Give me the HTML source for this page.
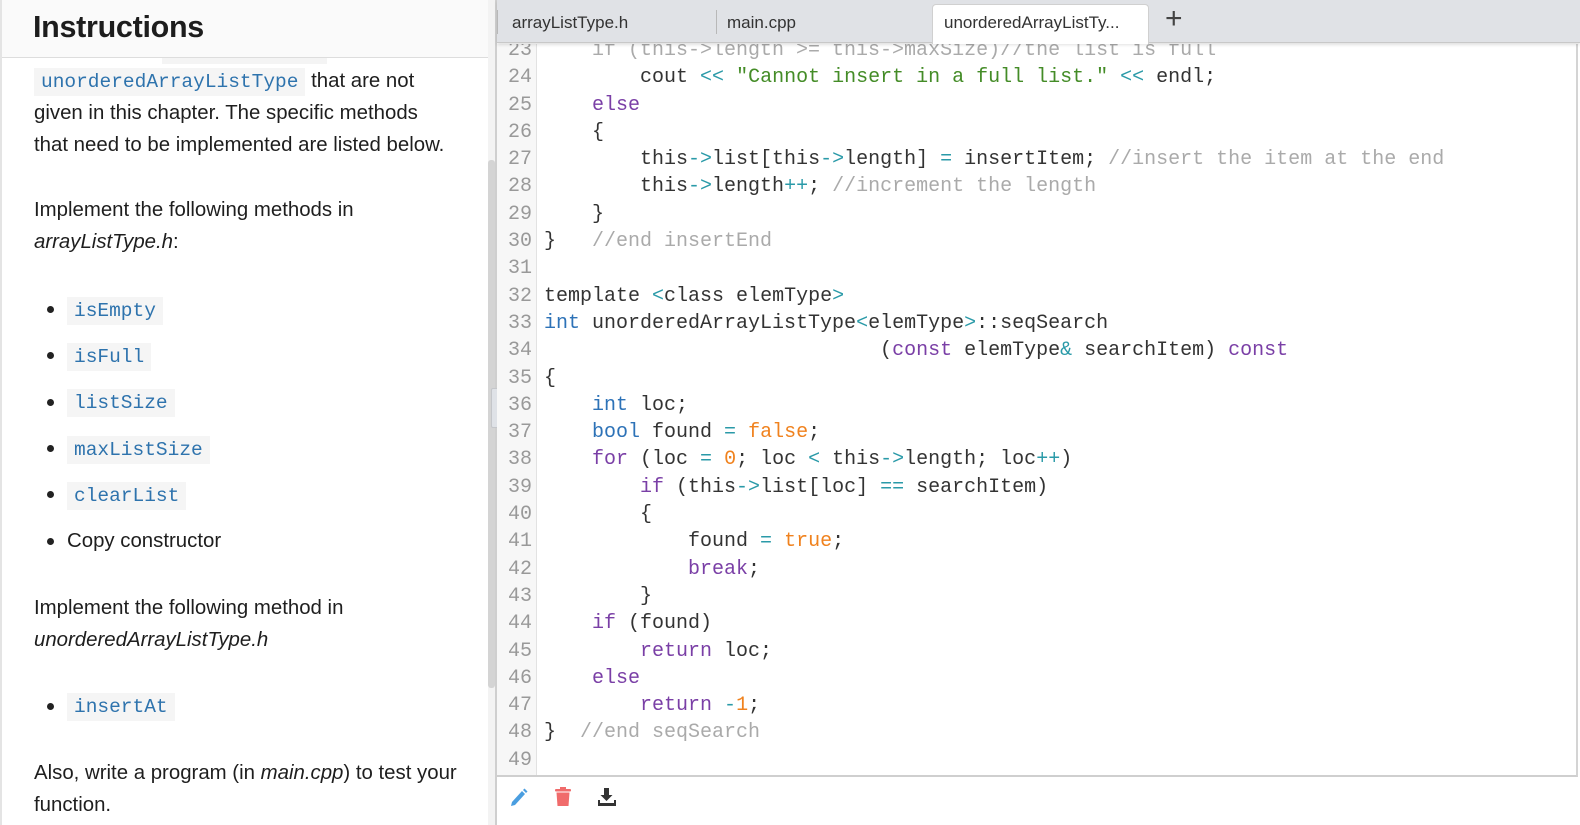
<!DOCTYPE html>
<html><head><meta charset="utf-8"><style>
*{margin:0;padding:0;box-sizing:border-box}
body{width:1580px;height:825px;overflow:hidden;background:#fff;font-family:"Liberation Sans",sans-serif;position:relative}
#left{position:absolute;left:0;top:0;width:488px;height:825px;background:#fff;border-left:2px solid #e4e4e4;overflow:hidden}
#hdr{position:absolute;left:0;top:0;width:488px;height:58px;background:#fafafa;border-bottom:1px solid #ddd;z-index:2}
#hdr h1{position:absolute;left:31px;top:10px;font-size:30.5px;font-weight:bold;color:#1d1d1d;letter-spacing:-0.3px}
.t{position:absolute;left:32px;font-size:20.4px;color:#1e1e1e;line-height:32px;white-space:nowrap}
code{font-family:"Liberation Mono",monospace;color:#2e73ad;background:#f5f5f5;font-size:19.5px;padding:3px 7px}
.b{position:absolute;left:45px;width:7px;height:7px;border-radius:50%;background:#222}
#track{position:absolute;left:488px;top:0;width:7px;height:825px;background:#f3f3f3}
#thumb{position:absolute;left:488px;top:160px;width:7px;height:528px;background:#d4d4d4;border-radius:3px}
#div{position:absolute;left:495px;top:0;width:2px;height:825px;background:#cfcfcf}
#handle{position:absolute;left:491px;top:388px;width:8px;height:40px;background:#dfe2e7;border:1px solid #c4c6ca;border-radius:2px}
#right{position:absolute;left:497px;top:0;width:1083px;height:825px;background:#fff}
#tabs{position:absolute;left:0;top:0;width:1083px;height:43px;background:#e0e2e6;border-bottom:1px solid #c8c8c8;box-shadow:0 2px 3px rgba(0,0,0,.12);z-index:3}
.tab{position:absolute;top:13px;font-size:17px;color:#333}
.sep{position:absolute;top:10px;width:1px;height:24px;background:#b8b8b8}
#act{position:absolute;left:435px;top:4px;width:217px;height:40px;background:#fff;border:1px solid #d0d0d0;border-bottom:none;border-radius:4px 4px 0 0}
#code{position:absolute;left:0;top:44px;width:1081px;height:733px;overflow:hidden;border-bottom:2px solid #cfcfcf;border-right:2px solid #d4d4d4}
#gut{position:absolute;left:0;top:0;width:40px;height:733px;background:#f7f7f7;border-right:1px solid #e2e2e2}
#lines{position:absolute;left:7px;top:-7px;font-family:"Liberation Mono",monospace;font-size:20px;line-height:27.3px;white-space:pre;color:#333}
.ln{display:inline-block;width:28px;text-align:right;color:#999;margin-right:12px}
.k{color:#7a3fa6}.ty{color:#2d72b7}.o{color:#2a9aa8}.s{color:#448c27}.c{color:#aaa}.n{color:#f0821e}
#tb{position:absolute;left:0;top:777px;width:1083px;height:48px}
</style></head><body>
<div id="left">
<div id="hdr"><h1>Instructions</h1></div>
<div style="position:absolute;left:160px;top:58px;width:165px;height:6px;background:#f4f4f4"></div>
<div class="t" style="top:65px"><code>unorderedArrayListType</code> that are not</div>
<div class="t" style="top:97px">given in this chapter. The specific methods</div>
<div class="t" style="top:129px">that need to be implemented are listed below.</div>
<div class="t" style="top:194px">Implement the following methods in</div>
<div class="t" style="top:226px"><i>arrayListType.h</i>:</div>
<div class="b" style="top:306px"></div><div class="t" style="left:65px;top:294px"><code>isEmpty</code></div>
<div class="b" style="top:352px"></div><div class="t" style="left:65px;top:340px"><code>isFull</code></div>
<div class="b" style="top:399px"></div><div class="t" style="left:65px;top:386px"><code>listSize</code></div>
<div class="b" style="top:445px"></div><div class="t" style="left:65px;top:433px"><code>maxListSize</code></div>
<div class="b" style="top:491px"></div><div class="t" style="left:65px;top:479px"><code>clearList</code></div>
<div class="b" style="top:538px"></div><div class="t" style="left:65px;top:525px">Copy constructor</div>
<div class="t" style="top:592px">Implement the following method in</div>
<div class="t" style="top:624px"><i>unorderedArrayListType.h</i></div>
<div class="b" style="top:703px"></div><div class="t" style="left:65px;top:690px"><code>insertAt</code></div>
<div class="t" style="top:757px">Also, write a program (in <i>main.cpp</i>) to test your</div>
<div class="t" style="top:789px">function.</div>
</div>
<div id="track"></div><div id="thumb"></div><div id="div"></div><div id="handle"></div>
<div id="right">
<div id="tabs">
<div class="sep" style="left:0"></div>
<div class="tab" style="left:15px">arrayListType.h</div>
<div class="sep" style="left:219px"></div>
<div class="tab" style="left:230px">main.cpp</div>
<div id="act"></div>
<div class="tab" style="left:447px">unorderedArrayListTy...</div>
<div style="position:absolute;left:668px;top:2px;font-size:30px;color:#444">+</div>
</div>
<div id="code"><div id="gut"></div>
<div id="lines"><span class="ln">23</span><span class="c">    if (this->length >= this->maxSize)//the list is full</span>
<span class="ln">24</span>        cout <span class="o">&lt;&lt;</span> <span class="s">"Cannot insert in a full list."</span> <span class="o">&lt;&lt;</span> endl;
<span class="ln">25</span>    <span class="k">else</span>
<span class="ln">26</span>    {
<span class="ln">27</span>        this<span class="o">-&gt;</span>list[this<span class="o">-&gt;</span>length] <span class="o">=</span> insertItem; <span class="c">//insert the item at the end</span>
<span class="ln">28</span>        this<span class="o">-&gt;</span>length<span class="o">++</span>; <span class="c">//increment the length</span>
<span class="ln">29</span>    }
<span class="ln">30</span>}   <span class="c">//end insertEnd</span>
<span class="ln">31</span>
<span class="ln">32</span>template <span class="o">&lt;</span>class elemType<span class="o">&gt;</span>
<span class="ln">33</span><span class="ty">int</span> unorderedArrayListType<span class="o">&lt;</span>elemType<span class="o">&gt;</span>::seqSearch
<span class="ln">34</span>                            (<span class="k">const</span> elemType<span class="o">&amp;</span> searchItem) <span class="k">const</span>
<span class="ln">35</span>{
<span class="ln">36</span>    <span class="ty">int</span> loc;
<span class="ln">37</span>    <span class="ty">bool</span> found <span class="o">=</span> <span class="n">false</span>;
<span class="ln">38</span>    <span class="k">for</span> (loc <span class="o">=</span> <span class="n">0</span>; loc <span class="o">&lt;</span> this<span class="o">-&gt;</span>length; loc<span class="o">++</span>)
<span class="ln">39</span>        <span class="k">if</span> (this<span class="o">-&gt;</span>list[loc] <span class="o">==</span> searchItem)
<span class="ln">40</span>        {
<span class="ln">41</span>            found <span class="o">=</span> <span class="n">true</span>;
<span class="ln">42</span>            <span class="k">break</span>;
<span class="ln">43</span>        }
<span class="ln">44</span>    <span class="k">if</span> (found)
<span class="ln">45</span>        <span class="k">return</span> loc;
<span class="ln">46</span>    <span class="k">else</span>
<span class="ln">47</span>        <span class="k">return</span> <span class="o">-</span><span class="n">1</span>;
<span class="ln">48</span>}  <span class="c">//end seqSearch</span>
<span class="ln">49</span>
</div></div>
<div id="tb">
<svg style="position:absolute;left:12px;top:10px" width="20" height="22" viewBox="0 0 20 22"><path d="M3 15 L13 4 L16 7 L6 18 L2 19 Z" fill="#4a9ee0"/><path d="M14 3 L15.5 1.5 L18.5 4.5 L17 6 Z" fill="#4a9ee0"/></svg>
<svg style="position:absolute;left:57px;top:10px" width="18" height="20" viewBox="0 0 18 20"><rect x="1" y="2" width="16" height="2.5" rx="1" fill="#f06b6b"/><rect x="6" y="0" width="6" height="2.5" fill="#f06b6b"/><path d="M2.5 5.5 H15.5 L14.5 19 H3.5 Z" fill="#f06b6b"/></svg>
<svg style="position:absolute;left:100px;top:10px" width="20" height="20" viewBox="0 0 20 20"><path d="M7 1 H12 V8 H15.5 L9.5 14 L3.5 8 H7 Z" fill="#333"/><path d="M1 13 H3 V16 H17 V13 H19 V19 H1 Z" fill="#333"/></svg>
</div>
</div>
</body></html>
